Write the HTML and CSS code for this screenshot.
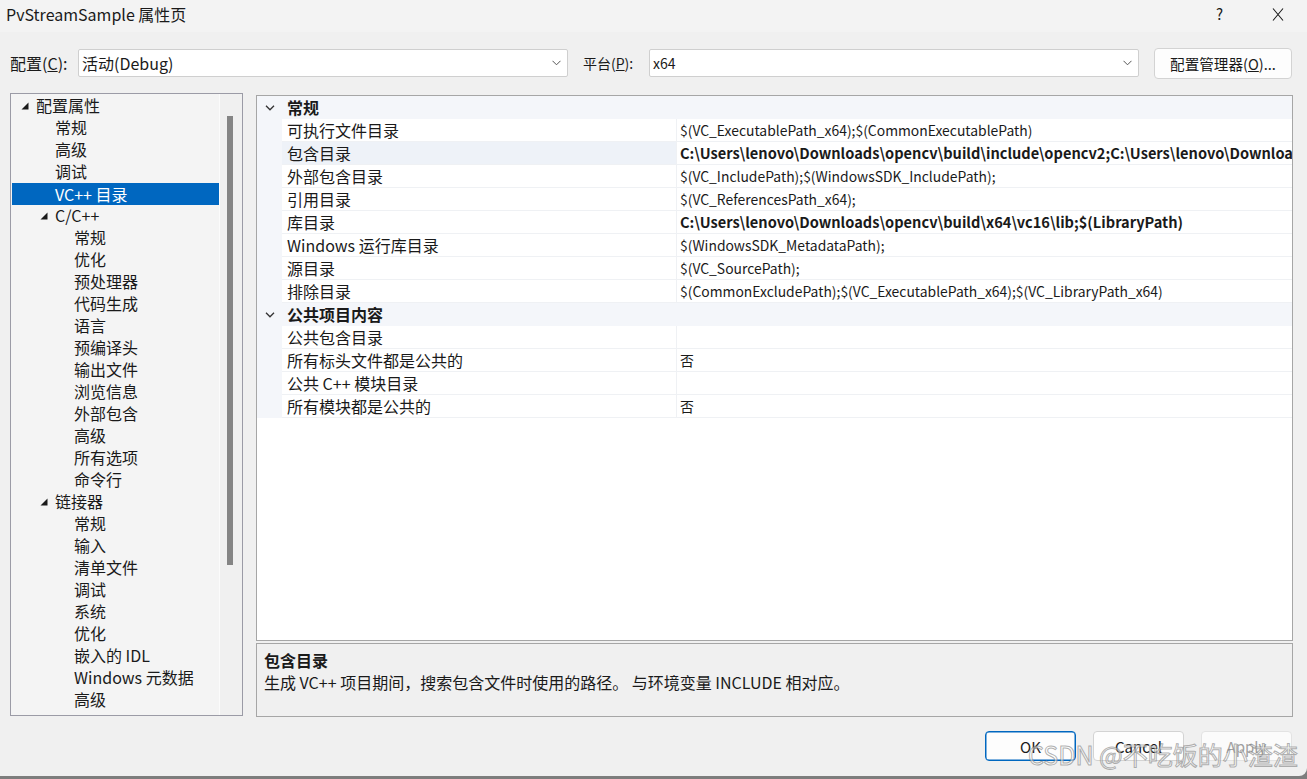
FILE: index.html
```html
<!DOCTYPE html>
<html lang="zh-CN">
<head>
<meta charset="utf-8">
<title>PvStreamSample 属性页</title>
<link rel="stylesheet" href="styles.css">
</head>
<body>
<div class="window">
  <div class="titlebar">
    <div class="title">PvStreamSample 属性页</div>
    <div class="caption-buttons">
      <span class="help">?</span>
      <svg class="close" width="12" height="13" viewBox="0 0 12 13"><path d="M1 0.5 L11 12.5 M11 0.5 L1 12.5" stroke="#1a1a1a" stroke-width="1.1" fill="none"/></svg>
    </div>
  </div>

  <div class="toolbar">
    <label class="tb-label first">配置(<u>C</u>):</label>
    <div class="combo">
      <span class="combo-text">活动(Debug)</span>
      <svg class="combo-arrow" width="9" height="6" viewBox="0 0 9 6"><path d="M0.5 0.8 L4.5 4.8 L8.5 0.8" stroke="#555" stroke-width="1" fill="none"/></svg>
    </div>
    <label class="tb-label second">平台(<u>P</u>):</label>
    <div class="combo">
      <span class="combo-text narrow">x64</span>
      <svg class="combo-arrow" width="9" height="6" viewBox="0 0 9 6"><path d="M0.5 0.8 L4.5 4.8 L8.5 0.8" stroke="#555" stroke-width="1" fill="none"/></svg>
    </div>
    <button class="btn cfg-btn">配置管理器(<u>O</u>)...</button>
  </div>

  <div class="main">
    <div class="tree">
      <div class="tree-list">
        <div class="node l0"><svg class="tri" width="8" height="8" viewBox="0 0 8 8"><path d="M7.5 0.5 L7.5 7.5 L0.5 7.5 Z" fill="#1a1a1a"/></svg>配置属性</div>
        <div class="node l1">常规</div>
        <div class="node l1">高级</div>
        <div class="node l1">调试</div>
        <div class="node l1 selected">VC++ 目录</div>
        <div class="node l1"><svg class="tri" width="8" height="8" viewBox="0 0 8 8"><path d="M7.5 0.5 L7.5 7.5 L0.5 7.5 Z" fill="#1a1a1a"/></svg>C/C++</div>
        <div class="node l2">常规</div>
        <div class="node l2">优化</div>
        <div class="node l2">预处理器</div>
        <div class="node l2">代码生成</div>
        <div class="node l2">语言</div>
        <div class="node l2">预编译头</div>
        <div class="node l2">输出文件</div>
        <div class="node l2">浏览信息</div>
        <div class="node l2">外部包含</div>
        <div class="node l2">高级</div>
        <div class="node l2">所有选项</div>
        <div class="node l2">命令行</div>
        <div class="node l1"><svg class="tri" width="8" height="8" viewBox="0 0 8 8"><path d="M7.5 0.5 L7.5 7.5 L0.5 7.5 Z" fill="#1a1a1a"/></svg>链接器</div>
        <div class="node l2">常规</div>
        <div class="node l2">输入</div>
        <div class="node l2">清单文件</div>
        <div class="node l2">调试</div>
        <div class="node l2">系统</div>
        <div class="node l2">优化</div>
        <div class="node l2">嵌入的 IDL</div>
        <div class="node l2">Windows 元数据</div>
        <div class="node l2">高级</div>
      </div>
      <div class="scrollbar"><div class="thumb"></div></div>
    </div>

    <div class="right">
      <div class="grid">
        <div class="cat">
          <div class="gutter"><svg width="10" height="6" viewBox="0 0 10 6"><path d="M1 0.8 L5 4.8 L9 0.8" stroke="#333" stroke-width="1.3" fill="none"/></svg></div>
          <div class="cat-name">常规</div>
        </div>
        <div class="row"><div class="gutter"></div><div class="name">可执行文件目录</div><div class="value">$(VC_ExecutablePath_x64);$(CommonExecutablePath)</div></div>
        <div class="row"><div class="gutter"></div><div class="name sel">包含目录</div><div class="value bold">C:\Users\lenovo\Downloads\opencv\build\include\opencv2;C:\Users\lenovo\Downloads\opencv\build\include;$(IncludePath)</div></div>
        <div class="row"><div class="gutter"></div><div class="name">外部包含目录</div><div class="value">$(VC_IncludePath);$(WindowsSDK_IncludePath);</div></div>
        <div class="row"><div class="gutter"></div><div class="name">引用目录</div><div class="value">$(VC_ReferencesPath_x64);</div></div>
        <div class="row"><div class="gutter"></div><div class="name">库目录</div><div class="value bold">C:\Users\lenovo\Downloads\opencv\build\x64\vc16\lib;$(LibraryPath)</div></div>
        <div class="row"><div class="gutter"></div><div class="name">Windows 运行库目录</div><div class="value">$(WindowsSDK_MetadataPath);</div></div>
        <div class="row"><div class="gutter"></div><div class="name">源目录</div><div class="value">$(VC_SourcePath);</div></div>
        <div class="row"><div class="gutter"></div><div class="name">排除目录</div><div class="value">$(CommonExcludePath);$(VC_ExecutablePath_x64);$(VC_LibraryPath_x64)</div></div>
        <div class="cat">
          <div class="gutter"><svg width="10" height="6" viewBox="0 0 10 6"><path d="M1 0.8 L5 4.8 L9 0.8" stroke="#333" stroke-width="1.3" fill="none"/></svg></div>
          <div class="cat-name">公共项目内容</div>
        </div>
        <div class="row"><div class="gutter"></div><div class="name">公共包含目录</div><div class="value"></div></div>
        <div class="row"><div class="gutter"></div><div class="name">所有标头文件都是公共的</div><div class="value">否</div></div>
        <div class="row"><div class="gutter"></div><div class="name">公共 C++ 模块目录</div><div class="value"></div></div>
        <div class="row"><div class="gutter"></div><div class="name">所有模块都是公共的</div><div class="value">否</div></div>
      </div>
      <div class="desc">
        <div class="desc-title">包含目录</div>
        <div class="desc-text">生成 VC++ 项目期间，搜索包含文件时使用的路径。 与环境变量 INCLUDE 相对应。</div>
      </div>
    </div>
  </div>

  <div class="footer">
    <button class="btn dlg ok">OK</button>
    <button class="btn dlg">Cancel</button>
    <button class="btn dlg disabled">Apply</button>
  </div>
  <div class="watermark">CSDN @不吃饭的小渣渣</div>
</div>
</body>
</html>
```

FILE: styles.css
```css
* { box-sizing: border-box; }
html, body { margin: 0; padding: 0; }
body {
  width: 1307px;
  height: 779px;
  overflow: hidden;
  background: #7d7d7d;
  font-family: "Noto Sans CJK SC", sans-serif;
  font-size: 16px;
  color: #1a1a1a;
}
.window {
  position: relative;
  width: 1307px;
  height: 776px;
  background: #f0f0f0;
  border-bottom-right-radius: 8px;
  overflow: hidden;
}
.titlebar {
  height: 32px;
  background: #f3f3f3;
  display: flex;
  align-items: center;
  justify-content: space-between;
  padding: 0 23px 0 6px;
}
.title { font-size: 16px; line-height: 20px; margin-top: -4px; }
.caption-buttons { display: flex; align-items: center; gap: 49px; margin-top: -4px; }
.help { font-size: 15px; line-height: 18px; color: #1a1a1a; margin-left: 2px; }
.close { display: block; }

.toolbar {
  display: flex;
  align-items: center;
  height: 32px;
  margin-top: 15px;
  padding-left: 10px;
}
.tb-label { line-height: 20px; white-space: nowrap; }
.tb-label.first { width: 68px; }
.tb-label.second { width: 66px; margin-left: 15px; font-size: 14px; }
.combo {
  width: 490px;
  height: 28px;
  background: #fff;
  border: 1px solid #cfcfcf;
  border-radius: 2px;
  display: flex;
  align-items: center;
  justify-content: space-between;
  padding: 0 6px 0 3px;
}
.combo-text { line-height: 20px; }
.combo-text.narrow { font-size: 14px; }
.combo-arrow { display: block; }
.btn {
  font-family: "Noto Sans CJK SC", sans-serif;
  color: #1a1a1a;
  background: #fdfdfd;
  border: 1px solid #d3d3d3;
  border-radius: 4px;
  padding: 0;
}
.cfg-btn {
  margin-left: 15px;
  width: 138px;
  height: 31px;
  font-size: 14.6px;
}

.main {
  display: flex;
  margin-top: 14px;
  padding-left: 10px;
  gap: 13px;
}
.tree {
  width: 233px;
  height: 623px;
  border: 1px solid #9b9ba6;
  background: #f4f4f4;
  display: flex;
}
.tree-list {
  width: 209px;
  padding: 0 0 0 1px;
  border-right: 1px solid #fbfbfb;
}
.node {
  position: relative;
  height: 22px;
  line-height: 22px;
  white-space: nowrap;
}
.node.l0 { padding-left: 24px; }
.node.l1 { padding-left: 43px; }
.node.l2 { padding-left: 62px; }
.node.selected { background: #0067c0; color: #fff; margin-top: 1px; margin-bottom: -1px; }
.tri { position: absolute; top: 8px; }
.node.l0 .tri { left: 9px; }
.node.l1 .tri { left: 28px; }
.scrollbar {
  flex: 1;
  background: #f0f0f0;
  padding: 22px 0 0 7px;
}
.thumb {
  width: 6px;
  height: 449px;
  background: #858585;
}

.right {
  width: 1037px;
  display: flex;
  flex-direction: column;
  gap: 2px;
  padding-top: 2px;
}
.grid {
  height: 546px;
  border: 1px solid #a6a6a6;
  background: #fff;
  overflow: hidden;
}
.cat, .row {
  display: grid;
  grid-template-columns: 25px 395px 1fr;
  height: 23px;
}
.cat { background: #f4f6fa; }
.gutter {
  background: #f4f6fa;
  display: flex;
  align-items: center;
  justify-content: center;
}
.cat-name {
  grid-column: 2 / 4;
  font-weight: 700;
  line-height: 23px;
  padding-left: 5px;
}
.name, .value {
  line-height: 22px;
  height: 23px;
  border-bottom: 1px solid #eff1f4;
  white-space: nowrap;
  overflow: hidden;
}
.name { padding-left: 5px; border-right: 1px solid #eff1f4; }
.name.sel { background: #eef2f8; }
.value { padding-left: 3px; font-size: 13.9px; }
.value.bold { font-weight: 700; font-size: 14.6px; }

.desc {
  height: 74px;
  border: 1px solid #a6a6a6;
  background: #f0f0f0;
  padding: 5px 7px;
}
.desc-title { font-weight: 700; line-height: 22px; }
.desc-text { line-height: 22px; font-size: 16px; }

.footer {
  display: flex;
  justify-content: flex-end;
  gap: 17px;
  padding-right: 15px;
  margin-top: 14px;
}
.dlg {
  width: 91px;
  height: 30px;
  font-size: 15px;
}
.dlg.ok { border: 1px solid #0067c0; box-shadow: inset 0 0 0 0.5px #0067c0; }
.dlg.disabled { color: #a0a0a0; background: #fbfbfb; border-color: #e3e3e3; }

.watermark {
  position: absolute;
  left: 1028px;
  top: 737px;
  font-size: 25px;
  line-height: 34px;
  white-space: nowrap;
  color: rgba(255,255,255,0.55);
  -webkit-text-stroke: 1px rgba(110,110,110,0.55);
  pointer-events: none;
}
```
